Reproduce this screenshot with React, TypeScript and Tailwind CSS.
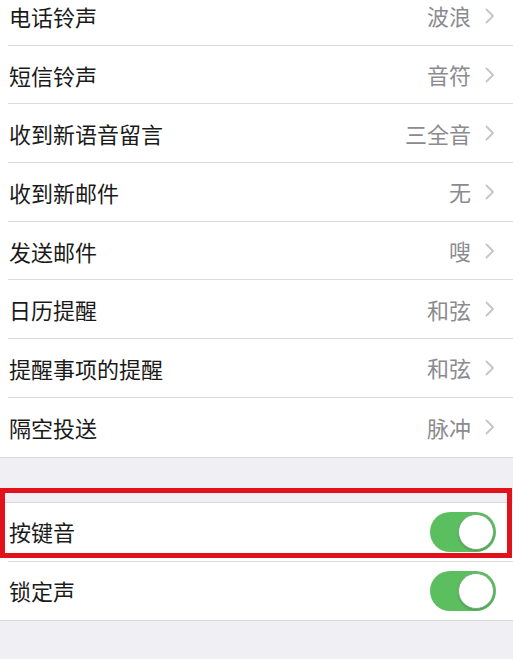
const ROWS: { label: string; value: string }[] = [
  { label: "电话铃声", value: "波浪" },
  { label: "短信铃声", value: "音符" },
  { label: "收到新语音留言", value: "三全音" },
  { label: "收到新邮件", value: "无" },
  { label: "发送邮件", value: "嗖" },
  { label: "日历提醒", value: "和弦" },
  { label: "提醒事项的提醒", value: "和弦" },
  { label: "隔空投送", value: "脉冲" },
];

function Chevron() {
  return (
    <svg width="10" height="16" viewBox="0 0 10 16" fill="none" className="shrink-0">
      <path d="M1.5 1.5 L8 8 L1.5 14.5" stroke="#c5c5c8" strokeWidth="1.8" strokeLinecap="round" strokeLinejoin="round" />
    </svg>
  );
}

function Toggle() {
  return (
    <div className="flex h-[40px] w-[66px] items-center justify-end rounded-full bg-[#5bbf60] p-[2px]">
      <div className="h-[36px] w-[36px] rounded-full border border-[#7fa882] bg-white shadow-[0_1px_2px_rgba(0,0,0,0.2)]" />
    </div>
  );
}

export default function App() {
  return (
    <div className="h-[659px] w-[513px] overflow-hidden bg-[#efeff4] font-['Noto_Sans_CJK_SC',sans-serif] text-[22px]">
      {/* ringtone list, first row cut off at the top */}
      <div className="-mt-[13px] border-b border-[#d8d8dc] bg-white pl-[8px]">
        {ROWS.map((row, i) => (
          <div
            key={row.label}
            className={`flex h-[58.7px] items-center pr-[18px] ${
              i < ROWS.length - 1 ? "border-b border-[#dcdce0]" : ""
            }`}
          >
            <span className="flex-1 pl-[1px] pt-[1px] text-[#1a1a1a]">{row.label}</span>
            <span className="mr-[14px] text-[#8b8b8f]">{row.value}</span>
            <Chevron />
          </div>
        ))}
      </div>

      <div className="relative">
        <div className="h-[44px]" />
        <div className="border-y border-[#d8d8dc] bg-white pl-[8px]">
          <div className="flex h-[59px] items-center border-b border-[#dcdce0] pr-[17px]">
            <span className="flex-1 pl-[1px] text-[#1a1a1a]">按键音</span>
            <Toggle />
          </div>
          <div className="flex h-[58px] items-center pr-[17px]">
            <span className="flex-1 pl-[1px] text-[#1a1a1a]">锁定声</span>
            <Toggle />
          </div>
        </div>
        {/* red highlight annotation */}
        <div className="absolute left-0 right-[1px] top-[30px] h-[70px] border-[5px] border-[#e3111b]" />
      </div>
    </div>
  );
}
